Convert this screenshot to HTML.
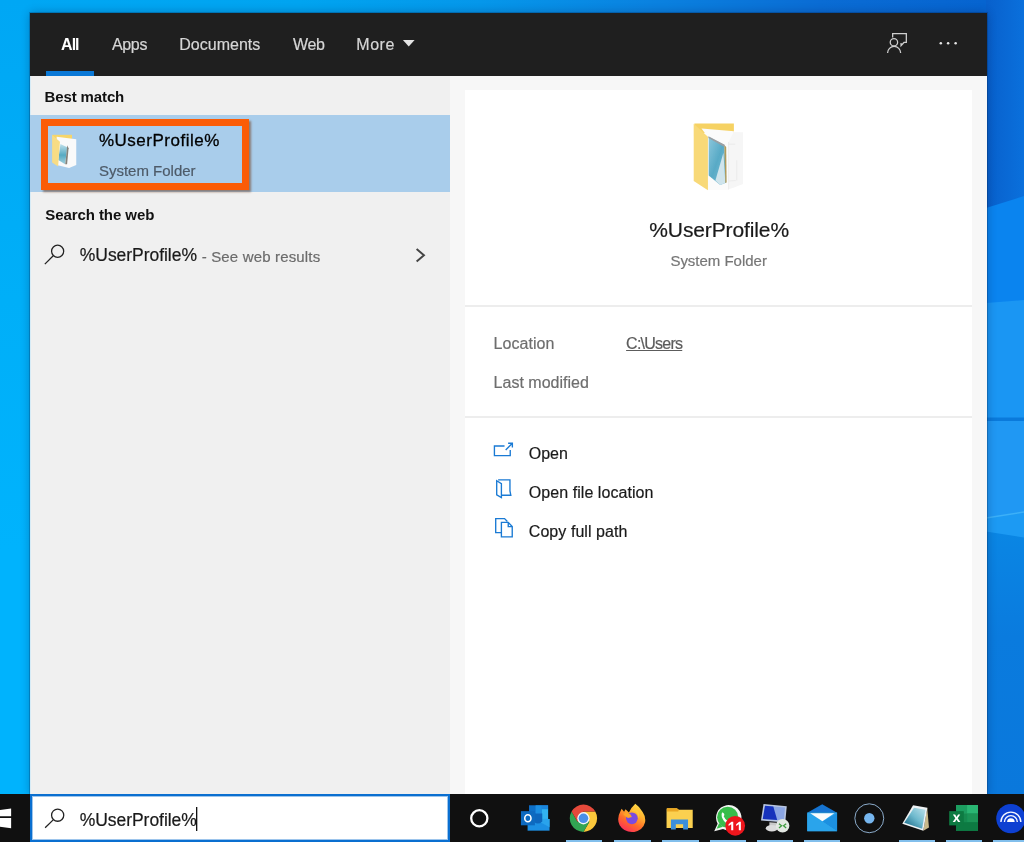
<!DOCTYPE html>
<html>
<head>
<meta charset="utf-8">
<style>
*{margin:0;padding:0;box-sizing:border-box;}
html,body{width:1024px;height:842px;overflow:hidden;}
body{font-family:"Liberation Sans",sans-serif;position:relative;background:#0a6ad0;}
.abs{position:absolute;}
.t{white-space:nowrap;}
#deskT{left:0;top:0;width:1024px;height:14px;background:linear-gradient(90deg,#00a7f4 0px,#00a4f0 300px,#0597ea 480px,#0a82e0 650px,#0a6cd4 820px,#0562cf 1024px);}
#deskL{left:0;top:0;width:31px;height:795px;background:linear-gradient(180deg,#00a7f4 0px,#00aff8 300px,#00b3fd 550px,#00b3fd 795px);}
#panel{left:30px;top:13px;width:957px;height:782px;background:#f7f7f7;box-shadow:0 0 0 1px rgba(0,25,60,.22),0 0 9px rgba(0,25,70,.32);}
#hdr{left:30px;top:13px;width:957px;height:63px;background:#1f1f1f;}
#left{left:30px;top:76px;width:420px;height:719px;background:#f0f0f0;}
#card{left:465px;top:90px;width:507px;height:705px;background:#fff;}
#uline{left:46px;top:71px;width:48px;height:5px;background:#0a78d6;}
#best{left:30px;top:115px;width:420px;height:77px;background:#a9cdeb;}
#obox{left:41px;top:119px;width:208px;height:71px;border:7px solid #fb5c06;box-shadow:1.5px 1.5px 2px rgba(110,55,20,.55);}
#task{left:0;top:794px;width:1024px;height:48px;background:#101010;}
#sbox{left:30px;top:794px;width:420px;height:48px;background:#fff;border:2px solid #0a6fd0;box-shadow:inset 0 0 0 1px rgba(10,111,208,.4);}
.ul{top:840px;height:2px;background:#82bfec;}
</style>
</head>
<body>
<div id="deskT" class="abs"></div>
<div id="deskL" class="abs"></div>
<svg class="abs" style="left:986px;top:0" width="38" height="795" viewBox="986 0 38 795" preserveAspectRatio="none">
<defs>
<linearGradient id="dr1" x1="0" y1="0" x2="1" y2="0"><stop offset="0" stop-color="#0860cc"/><stop offset="1" stop-color="#0a70dc"/></linearGradient>
<linearGradient id="dr5" x1="0" y1="0" x2="0" y2="1"><stop offset="0" stop-color="#0a86e4"/><stop offset="0.4" stop-color="#0a7bde"/><stop offset="1" stop-color="#0a78dc"/></linearGradient>
</defs>
<rect x="986" y="0" width="38" height="215" fill="url(#dr1)"/>
<path d="M986 208 L1024 196 L1024 305 L986 305 Z" fill="#0a84ef"/>
<path d="M986 303 L1024 300 L1024 420 L986 420 Z" fill="#1a96f3"/>
<rect x="986" y="417.5" width="38" height="3.5" fill="#0a7adb"/>
<rect x="986" y="421" width="38" height="120" fill="#2098f3"/>
<path d="M986 518 L1024 512 L1024 538 L986 533 Z" fill="#1c9af3"/>
<path d="M986 518 L1024 512" stroke="#3cb0f8" stroke-width="1.6" fill="none"/>
<path d="M986 531.5 L1024 537.5 L1024 795 L986 795 Z" fill="url(#dr5)"/>
</svg>
<div id="panel" class="abs"></div>
<div id="hdr" class="abs"></div>
<div id="left" class="abs"></div>
<div id="card" class="abs"></div>
<div id="uline" class="abs"></div>
<div class="abs" style="left:30px;top:76px;width:1px;height:718px;background:#d6ebf6;"></div>
<div id="best" class="abs"></div>
<div id="obox" class="abs"></div>
<div class="abs" style="left:465px;top:305px;width:507px;height:2px;background:#ededed;"></div>
<div class="abs" style="left:465px;top:416px;width:507px;height:2px;background:#ededed;"></div>
<div id="task" class="abs"></div>
<div id="sbox" class="abs"></div>
<div class="abs" style="left:196px;top:807px;width:1px;height:24px;background:#111;"></div>
<div class="abs" style="left:197px;top:807px;width:1px;height:24px;background:rgba(0,0,0,.3);"></div>
<div class="abs" style="left:0;top:0;width:1024px;height:842px;will-change:transform;">
<div class="abs t" style="left:61.10px;top:37.16px;font-size:16px;line-height:16px;color:#ffffff;font-weight:bold;letter-spacing:-1.000px;">All</div>
<div class="abs t" style="left:111.90px;top:37.16px;font-size:16px;line-height:16px;color:#d6d6d6;font-weight:normal;letter-spacing:-0.323px;-webkit-text-stroke:0.2px #d6d6d6;">Apps</div>
<div class="abs t" style="left:179.20px;top:37.16px;font-size:16px;line-height:16px;color:#d6d6d6;font-weight:normal;letter-spacing:0.022px;-webkit-text-stroke:0.2px #d6d6d6;">Documents</div>
<div class="abs t" style="left:292.90px;top:37.16px;font-size:16px;line-height:16px;color:#d6d6d6;font-weight:normal;letter-spacing:-0.255px;-webkit-text-stroke:0.2px #d6d6d6;">Web</div>
<div class="abs t" style="left:356.30px;top:37.16px;font-size:16px;line-height:16px;color:#d6d6d6;font-weight:normal;letter-spacing:0.548px;-webkit-text-stroke:0.2px #d6d6d6;">More</div>
<div class="abs t" style="left:44.60px;top:89.20px;font-size:15px;line-height:15px;color:#111111;font-weight:bold;letter-spacing:-0.133px;">Best match</div>
<div class="abs t" style="left:98.90px;top:132.21px;font-size:17px;line-height:17px;color:#000000;font-weight:normal;letter-spacing:0.509px;-webkit-text-stroke:0.3px #000;">%UserProfile%</div>
<div class="abs t" style="left:98.90px;top:162.50px;font-size:15px;line-height:15px;color:#4d5a68;font-weight:normal;letter-spacing:0.000px;-webkit-text-stroke:0.2px #4d5a68;">System Folder</div>
<div class="abs t" style="left:45.20px;top:206.70px;font-size:15px;line-height:15px;color:#111111;font-weight:bold;letter-spacing:-0.067px;">Search the web</div>
<div class="abs t" style="left:79.80px;top:246.69px;font-size:17.5px;line-height:17.5px;color:#1a1a1a;font-weight:normal;letter-spacing:-0.043px;-webkit-text-stroke:0.2px #1a1a1a;">%UserProfile%</div>
<div class="abs t" style="left:201.70px;top:248.90px;font-size:15px;line-height:15px;color:#6b6b6b;font-weight:normal;letter-spacing:0.164px;-webkit-text-stroke:0.2px #6b6b6b;">- See web results</div>
<div class="abs t" style="left:649.30px;top:218.82px;font-size:21px;line-height:21px;color:#1a1a1a;font-weight:normal;letter-spacing:-0.120px;-webkit-text-stroke:0.2px #1a1a1a;">%UserProfile%</div>
<div class="abs t" style="left:670.40px;top:253.20px;font-size:15px;line-height:15px;color:#767676;font-weight:normal;letter-spacing:-0.017px;-webkit-text-stroke:0.2px #767676;">System Folder</div>
<div class="abs t" style="left:493.60px;top:336.36px;font-size:16px;line-height:16px;color:#6e6e6e;font-weight:normal;letter-spacing:0.044px;-webkit-text-stroke:0.2px #6e6e6e;">Location</div>
<div class="abs t" style="left:626.10px;top:336.36px;font-size:16px;line-height:16px;color:#5c5c5c;font-weight:normal;letter-spacing:-0.761px;text-decoration:underline;text-underline-offset:1px;-webkit-text-stroke:0.2px #5c5c5c;">C:\Users</div>
<div class="abs t" style="left:493.60px;top:375.06px;font-size:16px;line-height:16px;color:#6e6e6e;font-weight:normal;letter-spacing:0.003px;-webkit-text-stroke:0.2px #6e6e6e;">Last modified</div>
<div class="abs t" style="left:528.80px;top:445.86px;font-size:16px;line-height:16px;color:#1a1a1a;font-weight:normal;letter-spacing:-0.014px;-webkit-text-stroke:0.2px #1a1a1a;">Open</div>
<div class="abs t" style="left:528.80px;top:485.06px;font-size:16px;line-height:16px;color:#1a1a1a;font-weight:normal;letter-spacing:0.057px;-webkit-text-stroke:0.2px #1a1a1a;">Open file location</div>
<div class="abs t" style="left:528.80px;top:524.36px;font-size:16px;line-height:16px;color:#1a1a1a;font-weight:normal;letter-spacing:0.059px;-webkit-text-stroke:0.2px #1a1a1a;">Copy full path</div>
<div class="abs t" style="left:79.70px;top:811.89px;font-size:17.5px;line-height:17.5px;color:#1a1a1a;font-weight:normal;letter-spacing:-0.043px;-webkit-text-stroke:0.2px #1a1a1a;">%UserProfile%</div>
</div>
<!-- more arrow -->
<svg class="abs" style="left:400px;top:38px" width="18" height="12" viewBox="0 0 18 12"><path d="M2.9 2.1 L14.6 2.1 L8.75 8.4 Z" fill="#e4e4e4"/></svg>
<!-- feedback + dots -->
<svg class="abs" style="left:870px;top:20px" width="100" height="50" viewBox="0 0 1024 512" fill="none" stroke="#cfcfcf" stroke-width="13">
<path d="M232 178 L232 140 L372 140 L372 230 L348 230 L318 262 L318 235"/>
<circle cx="245" cy="228" r="38" fill="#1f1f1f"/>
<path d="M180 338 A67 67 0 0 1 314 338"/>
<g fill="#e6e6e6" stroke="none"><circle cx="725" cy="237" r="13"/><circle cx="800" cy="237" r="13"/><circle cx="877" cy="237" r="13"/></g>
</svg>
<!-- magnifier list -->
<svg class="abs" style="left:30px;top:230px" width="100" height="50" viewBox="0 0 1024 512" fill="none" stroke="#222" stroke-width="13">
<circle cx="283" cy="218" r="62"/><path d="M238 264 L152 349" stroke-linecap="butt"/>
</svg>
<!-- chevron -->
<svg class="abs" style="left:380px;top:230px" width="100" height="50" viewBox="0 0 1024 512" fill="none" stroke="#444" stroke-width="20">
<path d="M375 195 L450 258 L375 322"/>
</svg>
<!-- action icons -->
<svg class="abs" style="left:480px;top:430px" width="80" height="120" viewBox="0 0 561 842" fill="none" stroke="#1a7ad4" stroke-width="9.5" stroke-linejoin="miter">
<path d="M172 112 L101 112 L101 180 L212 180 L212 140"/>
<path d="M180 140 L227 93 M197 93 L227 93 L227 122"/>
<path d="M127 350 L210 350 L210 428 L216 458 L150 458"/>
<path d="M117 356 L150 377 L150 474 L117 455 Z"/>
<path d="M152 720 L110 720 L110 622 L172 622 L192 642"/>
<path d="M150 648 L198 648 L226 678 L226 750 L150 750 Z M198 648 L198 678 L226 678"/>
</svg>
<!-- start logo -->
<svg class="abs" style="left:0px;top:780px" width="120" height="62" viewBox="0 0 1024 529">
<path d="M0 256 L95 243 L95 310 L0 310 Z M0 325 L95 325 L95 412 L0 399 Z" fill="#fff"/>
</svg>
<!-- magnifier search box -->
<svg class="abs" style="left:0px;top:780px" width="120" height="62" viewBox="0 0 1024 529" fill="none" stroke="#222" stroke-width="11">
<circle cx="492" cy="300" r="52"/><path d="M454 340 L385 408"/>
</svg>
<!-- large folder -->
<svg class="abs" style="left:670px;top:110px" width="100" height="90" viewBox="0 0 936 842">
<defs>
<linearGradient id="np1" x1="0" y1="0" x2="1" y2="1"><stop offset="0" stop-color="#8cc7dc"/><stop offset="0.5" stop-color="#58aac6"/><stop offset="1" stop-color="#7fc0d6"/></linearGradient>
<filter id="b1" x="-10%" y="-10%" width="120%" height="120%"><feGaussianBlur stdDeviation="4"/></filter>
</defs>
<g filter="url(#b1)">
<path d="M228 125 L598 125 L598 215 L228 215 Z" fill="#f6d264"/>
<path d="M540 205 L683 207 L684 692 L600 725 L540 745 Z" fill="#f6f6f6"/>
<path d="M295 172 L600 198 L548 300 L548 748 L352 748 L352 250 Z" fill="#fbfbfb"/>
<path d="M548 320 L610 320 M625 470 L625 660 M548 665 L615 660" stroke="#e2e2e2" stroke-width="5" fill="none"/>
<path d="M548 300 L548 745" stroke="#e6e6e6" stroke-width="6" fill="none"/>
<path d="M362 250 L508 328 L524 680 L470 702 L362 612 Z" fill="url(#np1)"/>
<path d="M500 400 L518 682 L470 702 L425 660 Z" fill="#cfe4ec"/>
<path d="M508 328 L526 345 L530 678 L518 684 Z" fill="#b09a5a"/>
<path d="M360 246 L512 326 L510 345 L360 262 Z" fill="#9a9fa3"/>
<path d="M222 128 L355 250 L355 750 L222 665 Z" fill="#f8d978"/>
</g>
</svg>
<!-- small folder -->
<svg class="abs" style="left:40px;top:120px" width="60" height="70" viewBox="0 0 722 842">
<defs>
<linearGradient id="np2" x1="0" y1="0" x2="0" y2="1"><stop offset="0" stop-color="#c2e1eb"/><stop offset="0.55" stop-color="#57aac2"/><stop offset="1" stop-color="#a2d0dd"/></linearGradient>
<filter id="b2" x="-10%" y="-10%" width="120%" height="120%"><feGaussianBlur stdDeviation="5"/></filter>
</defs>
<g filter="url(#b2)">
<path d="M148 178 L385 178 L385 240 L148 240 Z" fill="#f6d56a"/>
<path d="M200 200 L436 232 L436 540 L350 578 L215 545 Z" fill="#fafafa"/>
<path d="M245 288 L328 328 L302 532 L220 482 Z" fill="url(#np2)"/>
<path d="M328 305 L344 340 L326 532 L304 532 Z" fill="#85827a"/>
<path d="M146 180 L240 262 L218 560 L146 512 Z" fill="#f8dc84"/>
</g>
</svg>
<!-- underlines -->
<div class="abs ul" style="left:566px;width:36px;"></div>
<div class="abs ul" style="left:614px;width:36.5px;"></div>
<div class="abs ul" style="left:662px;width:36.5px;"></div>
<div class="abs ul" style="left:710px;width:35.5px;"></div>
<div class="abs ul" style="left:757px;width:35.5px;"></div>
<div class="abs ul" style="left:804px;width:36px;"></div>
<div class="abs ul" style="left:898.5px;width:36px;"></div>
<div class="abs ul" style="left:946px;width:36px;"></div>
<div class="abs ul" style="left:993px;width:31px;"></div>
<!-- cortana -->
<svg class="abs" style="left:460px;top:800px" width="40" height="40" viewBox="0 0 40 40"><circle cx="19.3" cy="18.3" r="8.1" fill="none" stroke="#fff" stroke-width="2.3"/></svg>
<!-- outlook + chrome -->
<svg class="abs" style="left:510px;top:796px" width="100" height="46" viewBox="0 0 1024 471">
<defs><filter id="b3" x="-10%" y="-10%" width="120%" height="120%"><feGaussianBlur stdDeviation="3"/></filter></defs>
<g filter="url(#b3)">
<rect x="195" y="95" width="195" height="150" fill="#0f6fc8"/>
<rect x="262" y="95" width="65" height="150" fill="#1c8fe2"/>
<rect x="327" y="130" width="63" height="115" fill="#31b3f1"/>
<rect x="327" y="95" width="63" height="40" fill="#1a86dc"/>
<path d="M180 235 L405 235 L405 355 L180 355 Z" fill="#1b8fe3"/>
<path d="M250 235 L405 235 L405 320 Z" fill="#2aa3ec"/>
<path d="M220 180 L330 180 L330 260 Q290 300 250 270 Z" fill="#0f66bd"/>
<rect x="112" y="155" width="143" height="145" fill="#0f6ac0"/>
<ellipse cx="183" cy="228" rx="32" ry="36" fill="none" stroke="#fff" stroke-width="16"/>
<path d="M873.2 158.0 A140 140 0 0 1 752.0 368.0 L812.6 263.0 L752 228 L752.0 158.0 Z" fill="#fbc73a"/>
<path d="M752.0 368.0 A140 140 0 0 1 630.8 158.0 L691.4 263.0 L752 228 L812.6 263.0 Z" fill="#32a552"/>
<path d="M630.8 158.0 A140 140 0 0 1 873.2 158.0 L752.0 158.0 L752 228 L691.4 263.0 Z" fill="#e64a3b"/><circle cx="752" cy="228" r="63" fill="#f4f6fa"/>
<circle cx="752" cy="228" r="49" fill="#4a8fe8"/>
</g>
</svg>
<!-- firefox + explorer -->
<svg class="abs" style="left:606px;top:796px" width="100" height="46" viewBox="0 0 1024 471">
<defs>
<linearGradient id="ff1" x1="0.8" y1="0" x2="0.25" y2="1"><stop offset="0" stop-color="#ffe14a"/><stop offset="0.35" stop-color="#ffb02e"/><stop offset="0.65" stop-color="#ff6a2a"/><stop offset="1" stop-color="#fb2a5e"/></linearGradient>
<filter id="b4" x="-10%" y="-10%" width="120%" height="120%"><feGaussianBlur stdDeviation="3.5"/></filter>
</defs>
<g filter="url(#b4)">
<path d="M300 80 Q345 110 375 165 Q410 215 400 270 Q380 350 290 368 Q190 380 140 300 Q105 230 150 150 L160 130 L185 160 L200 135 L235 170 Q255 120 300 80 Z" fill="url(#ff1)"/>
<circle cx="265" cy="228" r="60" fill="#7a4be0"/>
<path d="M175 185 L215 165 L250 190 L265 215 L225 225 Q195 215 175 185 Z" fill="#ffa326"/>
<path d="M260 150 Q330 150 335 230 Q350 180 320 140 Q295 125 260 150 Z" fill="#ffc83a"/>
<path d="M625 125 L725 125 L745 142 L888 142 L888 328 L620 328 L620 130 Z" fill="#fbd04f"/>
<path d="M625 125 L725 125 L745 142 L740 158 L625 158 Z" fill="#eaa621"/>
<path d="M665 240 L840 240 L840 342 L790 342 L790 288 L715 288 L715 342 L665 342 Z" fill="#3a8fdb"/>
</g>
</svg>
<!-- whatsapp + rdp -->
<svg class="abs" style="left:702px;top:796px" width="100" height="46" viewBox="0 0 1024 471">
<defs><filter id="b5" x="-10%" y="-10%" width="120%" height="120%"><feGaussianBlur stdDeviation="3"/></filter></defs>
<g filter="url(#b5)">
<path d="M125 362 L160 285 A130 130 0 1 1 215 338 Z" fill="#f2f4f2"/>
<circle cx="263" cy="217" r="108" fill="#37bd4b"/>
<path d="M150 335 L175 280 L215 315 Z" fill="#37bd4b"/>
<path d="M205 170 Q218 165 228 185 Q232 200 222 208 Q235 240 262 255 Q275 245 288 255 Q300 268 290 280 Q260 295 225 255 Q190 210 205 170 Z" fill="#fff"/>
<circle cx="340" cy="305" r="101" fill="#ee141e"/>
<path d="M272 288 L302 263 L320 263 L320 350 L299 350 L299 290 L272 306 Z M350 288 L380 263 L398 263 L398 350 L377 350 L377 290 L350 306 Z" fill="#fff"/>
<path d="M630 82 L868 104 L852 272 L604 252 Z" fill="#b9c6e0"/>
<path d="M645 100 L850 118 L838 252 L622 236 Z" fill="#8ba6e4"/>
<path d="M645 100 L730 108 L770 245 L622 236 Z" fill="#1432bc"/>
<path d="M690 270 L760 275 L765 320 L690 320 Z" fill="#c9c9c9"/>
<ellipse cx="715" cy="330" rx="62" ry="34" fill="#dcdcdc"/>
<circle cx="825" cy="305" r="70" fill="#e3e8e2"/>
<path d="M788 283 L815 305 L788 327 M862 283 L835 305 L862 327" stroke="#3c9a3c" stroke-width="13" fill="none"/>
</g>
</svg>
<!-- mail + circle -->
<svg class="abs" style="left:798px;top:796px" width="100" height="46" viewBox="0 0 1024 471">
<defs><filter id="b6" x="-10%" y="-10%" width="120%" height="120%"><feGaussianBlur stdDeviation="3"/></filter></defs>
<g filter="url(#b6)">
<path d="M95 172 L248 84 L400 172 Z" fill="#1273d0"/>
<rect x="95" y="168" width="305" height="192" fill="#2ba4eb"/>
<path d="M250 262 L400 175 L400 360 Z" fill="#1d90e0"/>
<path d="M250 262 L400 360 L95 360 L95 175 Z" fill="#2ba4eb"/>
<path d="M125 176 L372 176 L250 258 Z" fill="#fbfbfb"/>
<circle cx="730" cy="228" r="148" fill="none" stroke="#9cc0e4" stroke-width="9"/>
<circle cx="730" cy="228" r="53" fill="#76b6ef"/>
</g>
</svg>
<!-- notepad + excel -->
<svg class="abs" style="left:894px;top:796px" width="100" height="46" viewBox="0 0 1024 471">
<defs>
<linearGradient id="nt1" x1="0.9" y1="0" x2="0.1" y2="0.9"><stop offset="0" stop-color="#b6dde8"/><stop offset="0.5" stop-color="#6fbace"/><stop offset="1" stop-color="#1f6f8c"/></linearGradient>
<filter id="b7" x="-10%" y="-10%" width="120%" height="120%"><feGaussianBlur stdDeviation="3"/></filter></defs>
<g filter="url(#b7)">
<path d="M340 120 L358 322 L300 357 Z" fill="#c9b98a"/>
<path d="M195 95 L342 120 L300 357 L85 285 Z" fill="#eef2f4"/>
<path d="M205 120 L322 140 L288 335 L105 275 Z" fill="url(#nt1)"/>
<rect x="635" y="92" width="225" height="264" fill="#168a50"/>
<rect x="748" y="92" width="112" height="88" fill="#2cb673"/>
<rect x="635" y="92" width="113" height="88" fill="#1f9d60"/>
<rect x="748" y="180" width="112" height="88" fill="#1a9457"/>
<rect x="635" y="268" width="225" height="88" fill="#107a43"/>
<rect x="565" y="155" width="150" height="146" fill="#0f7a42"/>
<path d="M603 190 L626 190 L641 216 L656 190 L678 190 L653 228 L680 266 L656 266 L640 240 L625 266 L601 266 L628 228 Z" fill="#fff"/>
</g>
</svg>
<!-- blue circle -->
<svg class="abs" style="left:964px;top:796px" width="60" height="46" viewBox="0 0 1024 785">
<defs><filter id="b8" x="-10%" y="-10%" width="120%" height="120%"><feGaussianBlur stdDeviation="5"/></filter></defs>
<g filter="url(#b8)">
<circle cx="800" cy="385" r="250" fill="#0b3fd2"/>
<path d="M630 445 A170 170 0 0 1 970 445 M690 445 A110 110 0 0 1 910 445" stroke="#f4f6ff" stroke-width="24" fill="none"/>
<path d="M735 445 A65 65 0 0 1 865 445 Z" fill="#fff"/>
</g>
</svg>
</body></html>
